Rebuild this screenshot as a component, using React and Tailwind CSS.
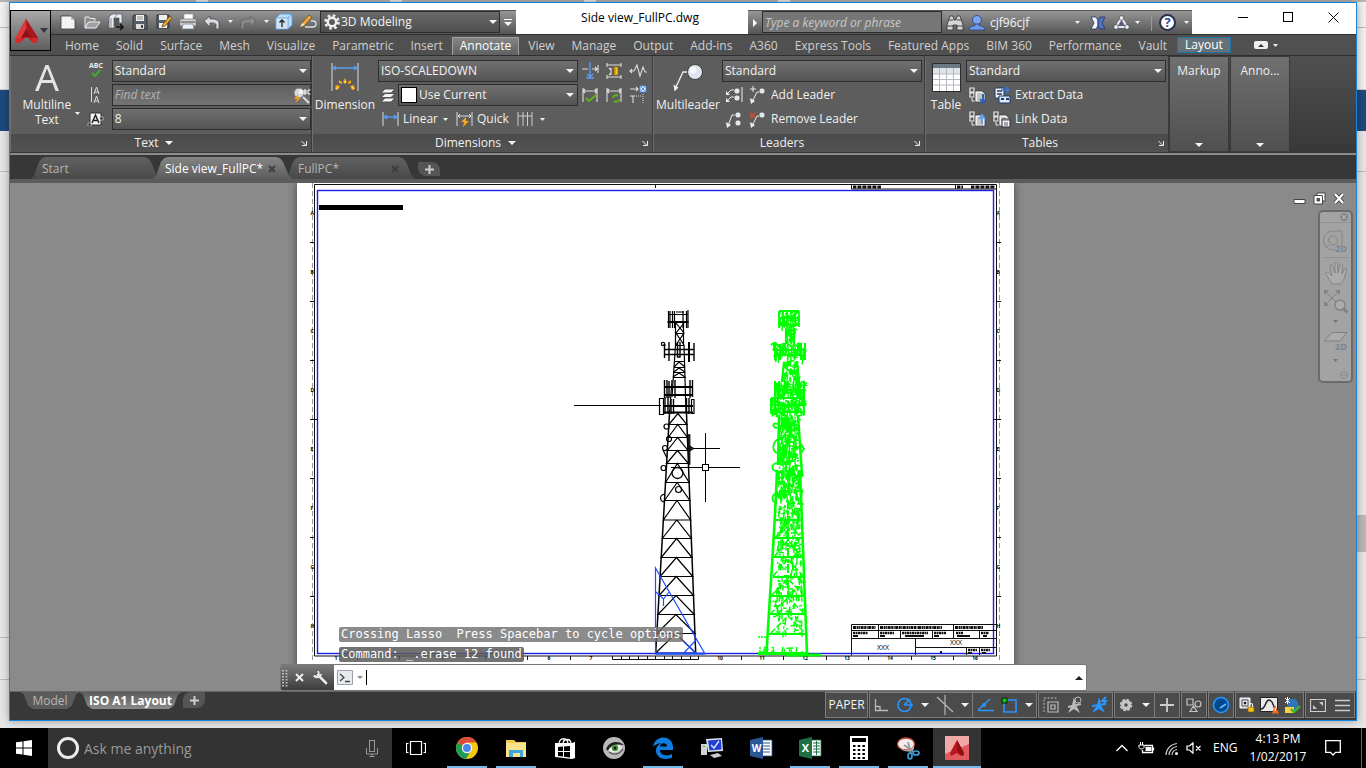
import { useState } from 'react';

const ribbonTabs = [
  'Home', 'Solid', 'Surface', 'Mesh', 'Visualize', 'Parametric', 'Insert', 'Annotate', 'View', 'Manage',
  'Output', 'Add-ins', 'A360', 'Express Tools', 'Featured Apps', 'BIM 360', 'Performance', 'Vault',
];

const Icon = ({ w = 20, h = 20, children }) => (
  <svg width={w} height={h} viewBox={`0 0 ${w} ${h}`} fill="none" aria-hidden="true" className="shrink-0">
    {children}
  </svg>
);

const Caret = ({ className = '' }) => (
  <svg width="8" height="4" viewBox="0 0 8 4" aria-hidden="true" className={`shrink-0 ${className}`}>
    <path d="M0 0h8L4 4z" fill="#f4f4f4" />
  </svg>
);

const SmallCaret = ({ className = '' }) => (
  <svg width="5" height="3" viewBox="0 0 5 3" aria-hidden="true" className={`shrink-0 ${className}`}>
    <path d="M0 0h5L2.500 3z" fill="#f0f0f0" />
  </svg>
);

const Combo = ({ label, value, className = '', pad = 'pl-[2px]' }) => (
  <div className={`relative flex h-[22px] ${className}`}>
    <select
      aria-label={label}
      className={`w-full appearance-none border border-[#2d2d2d] bg-linear-to-b from-[#717171] to-[#545454] ${pad} text-[12px] text-[#f2f2f2] outline-none`}
    >
      <option>{value}</option>
    </select>
    <Caret className="pointer-events-none absolute top-[9px] right-[4px]" />
  </div>
);

/* ---------- title bar ---------- */

const quickAccess = [
  {
    name: 'New',
    icon: (
      <Icon>
        <path d="M3 4h10l4 4v9H3z" fill="#f3f3f3" stroke="#3b3b3b" strokeWidth=".8" />
        <path d="M13 4v4h4z" fill="#bdbdbd" />
      </Icon>
    ),
  },
  {
    name: 'Open',
    icon: (
      <Icon>
        <path d="M3 16V5h4l1 1.500h5V9" fill="#8d8d8d" stroke="#eee" />
        <path d="M3 16l3.500-6H18l-4 6z" fill="#9aa0a6" stroke="#f2f2f2" />
      </Icon>
    ),
  },
  {
    name: 'Import',
    icon: (
      <Icon>
        <path d="M3 16V5l3-3h10v9h-3V6H8v10z" fill="#e8edf4" stroke="#59616c" strokeWidth=".8" />
        <path d="M8 6h5v8H8z" fill="#555" />
        <path d="M5 6v10M8 6l3-3" stroke="#8a929c" />
        <path d="M10 15h7M14 12l3 3-3 3" stroke="#111" strokeWidth="1.600" />
      </Icon>
    ),
  },
  {
    name: 'Save',
    icon: (
      <Icon>
        <path d="M4 3h12l1 1v13H3V4z" fill="#555d66" stroke="#2f343a" />
        <path d="M6 3h8v6H6z" fill="#f2f2f2" />
        <path d="M7 5h6M7 7h6" stroke="#8b8b8b" />
        <path d="M6 12h8v5H6z" fill="#ddd" />
        <path d="M11 13h2v3h-2z" fill="#444" />
      </Icon>
    ),
  },
  {
    name: 'Save As',
    icon: (
      <Icon>
        <path d="M3 3h12v13H3z" fill="#59616b" stroke="#2f343a" />
        <path d="M5 3h8v5H5zM5 11h8v5H5z" fill="#eee" />
        <path d="M9 12l7-8 2 2-7 8-3 1z" fill="#f0a830" stroke="#5b3b10" strokeWidth=".7" />
      </Icon>
    ),
  },
  {
    name: 'Plot',
    icon: (
      <Icon>
        <path d="M6 2h9v6H6z" fill="#fff" stroke="#999" strokeWidth=".6" />
        <path d="M2 7h16v7H2z" fill="#d4d4d4" stroke="#6e6e6e" strokeWidth=".7" />
        <path d="M3 10h14" stroke="#444" />
        <path d="M5 12h10l1 5H4z" fill="#eaf1fa" stroke="#777" strokeWidth=".7" />
      </Icon>
    ),
  },
  {
    name: 'Undo',
    icon: (
      <Icon>
        <path d="M2 9l6-5v3c6-.5 9 1.500 9 4v6h-3v-4c0-1.800-2-2.400-6-2v4z" fill="#d9dbe0" stroke="#444" strokeWidth=".7" />
      </Icon>
    ),
  },
  { name: 'Undo list', small: true },
  {
    name: 'Redo',
    icon: (
      <Icon>
        <path d="M18 9l-6-5v3c-6-.5-9 1.500-9 4v6h3v-4c0-1.800 2-2.400 6-2v4z" fill="#8c8c8c" stroke="#5a5a5a" strokeWidth=".7" />
      </Icon>
    ),
  },
  { name: 'Redo list', small: true },
  {
    name: 'Extrude',
    icon: (
      <Icon>
        <path d="M2 6l4-4h12v11l-4 4H2z" fill="#c3ddf4" stroke="#5aa0dc" />
        <path d="M2 6h12v11M14 6l4-4" stroke="#5aa0dc" />
        <path d="M2.500 6.500h11v10h-11z" fill="#cfe3f5" />
        <path d="M8 15V8M5.500 10.500L8 8l2.500 2.500" stroke="#222" strokeWidth="1.300" />
      </Icon>
    ),
  },
  {
    name: 'Sketch',
    icon: (
      <Icon>
        <path d="M7 15h8c4 0 4-6 0-6h-2" stroke="#ddd" strokeWidth="1.300" />
        <path d="M2 15l2-4 7-8 3 2-7 8z" fill="#f2a93b" stroke="#6b4310" strokeWidth=".7" />
        <path d="M2 15l2-4 3 2z" fill="#f7e3c0" />
      </Icon>
    ),
  },
];

const QuickAccess = () => (
  <div className="flex h-[24px] shrink-0 items-stretch self-end border-t border-[#555] bg-linear-to-b from-[#969696] to-[#555] pl-[5px]">
    {quickAccess.map((q) => (
      <button key={q.name} aria-label={q.name} className={`flex items-center justify-center pb-[2px] ${q.small ? 'w-[12px]' : 'w-[24px]'}`}>
        {q.small ? <SmallCaret /> : q.icon}
      </button>
    ))}
    <div className="relative mb-px flex w-[180px] border border-[#2d2d2d]">
      <select aria-label="Workspace" className="w-full appearance-none bg-linear-to-b from-[#6a6a6a] to-[#4e4e4e] pl-[20px] text-[12px] text-[#f2f2f2] outline-none">
        <option>3D Modeling</option>
      </select>
      <div className="pointer-events-none absolute top-[2px] left-[3px]">
        <Icon w={16} h={16}>
          <circle cx="8" cy="8" r="6.500" stroke="#eee" strokeWidth="2.600" strokeDasharray="2.600 2.500" />
          <circle cx="8" cy="8" r="4.200" stroke="#f2f2f2" strokeWidth="2.400" />
        </Icon>
      </div>
      <Caret className="pointer-events-none absolute top-[8px] right-[2px]" />
    </div>
    <button aria-label="Customize Quick Access Toolbar" className="flex w-[16px] flex-col items-center justify-center gap-[2px]">
      <span className="h-px w-[8px] bg-white" />
      <Caret />
    </button>
  </div>
);

const InfoCenter = () => (
  <div className="flex h-[24px] w-[444px] shrink-0 items-center self-end border-t border-[#555] bg-linear-to-b from-[#969696] to-[#555]">
    <button aria-label="Collapse search" className="flex w-[14px] justify-center">
      <svg width="4" height="8" viewBox="0 0 4 8"><path d="M0 0v8l4-4z" fill="#fff" /></svg>
    </button>
    <input
      aria-label="Search"
      placeholder="Type a keyword or phrase"
      className="mb-px h-[22px] w-[180px] border border-[#2d2d2d] bg-[#767676] px-[2px] text-[12px] italic outline-none placeholder:text-[#c8c8c8]"
    />
    <button aria-label="Find" className="flex w-[26px] justify-center">
      <Icon w={18} h={18}>
        <path d="M4 2h3l1 4h2l1-4h3l3 9v5h-6v-5H7v5H1v-5z" fill="#d6d6d6" stroke="#333" strokeWidth=".8" />
        <path d="M3 6h4M11 6h4M1 12h6M11 12h6" stroke="#444" />
      </Icon>
    </button>
    <button className="flex flex-1 items-center gap-[4px] text-[12px] text-[#f4f4f4]">
      <Icon w={17} h={17}>
        <circle cx="9" cy="6" r="4.500" fill="#7ba3ee" stroke="#28417a" strokeWidth=".8" />
        <path d="M1 16c0-3 3-4 6-4.500V10h4v1.500c3 .5 6 1.500 6 4.500z" fill="#6d98ea" stroke="#28417a" strokeWidth=".8" />
      </Icon>
      <span className="flex-1 pl-px text-left">cjf96cjf</span>
      <SmallCaret className="mr-[8px]" />
    </button>
    <button aria-label="Exchange Apps" className="flex w-[20px] justify-center">
      <Icon w={16} h={14}>
        <path d="M1 1h5l2 3.500v5L6 13H1l3-6z" fill="#f1f4fb" stroke="#22345e" strokeWidth=".8" />
        <path d="M15 1h-5L8 4.500v5l2 3.500h5l-3-6z" fill="#4f74c4" stroke="#22345e" strokeWidth=".8" />
      </Icon>
    </button>
    <button aria-label="Autodesk" className="flex w-[36px] items-center justify-center gap-[5px]">
      <Icon w={17} h={15}>
        <path d="M8.500 3L3 12h11z" stroke="#e9ebf2" strokeWidth="2" />
        <path d="M8.500 5.500L5.500 11h6z" fill="#56607c" />
        <g fill="#f4f4f4" stroke="#39425c" strokeWidth=".7">
          <circle cx="8.500" cy="3" r="2.300" /><circle cx="3" cy="12" r="2.300" /><circle cx="14" cy="12" r="2.300" />
        </g>
      </Icon>
      <SmallCaret />
    </button>
    <span className="mx-[7px] h-[16px] w-px bg-[#9a9a9a]" />
    <button aria-label="Help" className="mr-[3px] flex items-center gap-[8px]">
      <span className="flex size-[17px] items-center justify-center rounded-full border-2 border-[#28314c] bg-white text-[13px] leading-none font-bold text-[#2b4c9b]">?</span>
      <SmallCaret />
    </button>
  </div>
);

const WindowButtons = () => (
  <div className="flex h-[28px] w-[164px] shrink-0 justify-end">
    <button aria-label="Minimize" className="flex w-[45px] items-center justify-center">
      <span className="h-px w-[10px] bg-black" />
    </button>
    <button aria-label="Maximize" className="flex w-[46px] items-center justify-center">
      <span className="size-[10px] border border-black" />
    </button>
    <button aria-label="Close" className="flex w-[45px] items-center justify-center">
      <Icon w={11} h={11}><path d="M.5.5l10 10M10.500.5l-10 10" stroke="#000" /></Icon>
    </button>
  </div>
);

const Header = ({ active, onSelect }) => (
  <header className="flex bg-[#505050]">
    <div className="w-[41px] shrink-0 border-t-[7px] border-white">
      <button aria-label="Application menu" className="flex h-[41px] w-full items-center border border-black bg-linear-to-b from-[#a9a9a9] to-[#5f5f5f] pl-[3px]">
        <Icon w={25} h={28}>
          <path d="M12 2L1 22l1 4 5-1 4-4h3l5 5h4l1-5z" fill="#c92026" />
          <path d="M12 2L1 22l6-1 5-7z" fill="#e0383b" />
          <path d="M12 2l12 19-5 1-6-8z" fill="#a9171c" />
          <path d="M7 21l5-9 6 9-4-1h-3z" fill="#8c1216" />
          <path d="M1 22l1 4 5-1 1-4zM18 21l1 5h4l1-5z" fill="#d32b2e" />
        </Icon>
        <svg width="8" height="5" viewBox="0 0 8 5" className="ml-px shrink-0"><path d="M0 0h8L4 5z" fill="#33373d" /></svg>
      </button>
    </div>
    <div className="flex min-w-0 flex-1 flex-col">
      <div className="flex h-[31px] bg-white">
        <QuickAccess />
        <h1 className="min-w-0 flex-1 truncate pt-[6px] pl-[16px] text-center text-[12px] leading-[18px] text-black">Side view_FullPC.dwg</h1>
        <InfoCenter />
        <WindowButtons />
      </div>
      <nav className="flex h-[21px] items-end gap-px border-t border-[#2f2f2f] pl-[6px]">
        {ribbonTabs.map((t) => (
          <button
            key={t}
            onClick={() => onSelect(t)}
            className={`h-[18px] border border-b-0 px-[7px] pb-[2px] text-[12px] leading-[14px] whitespace-nowrap ${
              t === active ? 'border-[#a0a0a0] bg-linear-to-b from-[#858585] to-[#606060] text-white' : 'border-transparent text-[#cfcfcf]'
            }`}
          >
            {t}
          </button>
        ))}
        <button className="mb-[2px] ml-px h-[16px] border border-[#2272a5] bg-[#66727a] px-[7px] text-[12px] leading-[12px] text-white">Layout</button>
        <button aria-label="Minimize ribbon" className="mb-[6px] ml-[22px] flex items-center gap-[5px]">
          <span className="flex h-[8px] w-[14px] items-center justify-center rounded-[2px] bg-[#eee]">
            <svg width="6" height="3" viewBox="0 0 6 3"><path d="M0 3h6L3 0z" fill="#333" /></svg>
          </span>
          <SmallCaret />
        </button>
      </nav>
    </div>
  </header>
);

/* ---------- ribbon ---------- */

const Panel = ({ title, menu, className = '', children }) => (
  <section className={`flex shrink-0 flex-col border-r border-[#3a3a3a] bg-[#5d5d5d] ${className}`}>
    <div className="flex h-[78px] border-l border-[#6e6e6e] pt-[4px]">{children}</div>
    <div className="flex h-[18px] items-center border-l border-[#6e6e6e] bg-linear-to-b from-[#4b4b4b] to-[#525252] pr-[4px]">
      <button className="flex flex-1 items-center justify-center gap-[7px] pr-[4px] text-[12px] leading-[16px] text-[#f0f0f0]">
        {title}
        {menu && <Caret />}
      </button>
      <button aria-label={`${title} settings`}>
        <Icon w={6} h={6}><path d="M.5 1l4 4M5.500 1v4.500H1" stroke="#eee" /></Icon>
      </button>
    </div>
  </section>
);

const IconButton = ({ label, className = 'w-[24px]', children }) => (
  <button aria-label={label} className={`flex h-[22px] shrink-0 items-center justify-center ${className}`}>
    {children}
  </button>
);

const TextPanel = () => (
  <Panel title="Text" menu className="w-[302px]">
    <button className="flex w-[72px] flex-col items-center pt-[4px] text-[12px] leading-[15px] text-[#f0f0f0]">
      <Icon w={26} h={28}>
        <path d="M1 27L11.500 1h3L25 27h-3.500l-3-8h-11l-3 8zM8.500 16h9L13 4.500z" fill="#e4e4e4" />
      </Icon>
      <span className="mt-[5px]">Multiline<br />Text</span>
    </button>
    <SmallCaret className="mt-[52px] -ml-[8px]" />
    <div className="ml-[4px] flex w-[24px] flex-col gap-[2px]">
      <IconButton label="Check Spelling">
        <svg width="18" height="18" viewBox="0 0 18 18" aria-hidden="true">
          <text x="9" y="6" fontSize="7" fontWeight="bold" textAnchor="middle" fill="#eee">ABC</text>
          <path d="M5 11l3 3 5-6" stroke="#3fae2a" strokeWidth="2" fill="none" />
        </svg>
      </IconButton>
      <IconButton label="Text Style">
        <Icon w={12} h={18}>
          <path d="M1.500 1v15" stroke="#ddd" />
          <path d="M4 8l2.500-7L9 8M5 6h3M4 17l2.500-7L9 17M5 15h3" stroke="#ddd" />
        </Icon>
      </IconButton>
      <IconButton label="Justify">
        <Icon w={17} h={14}>
          <path d="M3 1h11v12H3z" fill="#f3f3f3" stroke="#333" />
          <path d="M5 11L8.500 3 12 11M6.500 8.500h4" stroke="#222" strokeWidth="1.500" />
          <path d="M1 11h3v3H1zM13 5h3v3h-3z" fill="#222" stroke="#eee" strokeWidth=".6" />
        </Icon>
      </IconButton>
    </div>
    <div className="ml-[4px] flex w-[200px] flex-col gap-[2px]">
      <Combo label="Text style" value="Standard" />
      <div className="relative flex h-[22px]">
        <input aria-label="Find text" placeholder="Find text" className="w-full border border-[#2d2d2d] bg-linear-to-b from-[#606060] to-[#747474] px-[2px] text-[12px] italic outline-none placeholder:text-[#b4b4b4]" />
        <div className="pointer-events-none absolute top-[2px] right-0">
          <Icon w={18} h={18}>
            <circle cx="6" cy="7" r="5" fill="#d9d9d9" stroke="#777" />
            <path d="M10 11l6 6" stroke="#ddd" strokeWidth="2" />
            <path d="M7 8V4h2v4M7 6h2M11 4h2v4h-2zM11 6h2M17.500 4H15v4h2.500" stroke="#fff" />
            <path d="M5 8l-4 5h3l-2 4 6-5H5z" fill="#f49b16" />
          </Icon>
        </div>
      </div>
      <Combo label="Text height" value="8" />
    </div>
  </Panel>
);

const dimTools = [
  { name: 'Adjust Space', d: 'M1 8h6M17 4v8M16 8h-5M14 6l2 2-2 2', blue: 'M9 1v15M6 13l3 3 3-3M5 17h8' },
  { name: 'Break', d: 'M2 2v4M16 2v4M2 4h14M2 14v4M16 14v4M2 16h14M4 7l2 2v3l-2 2M6 7v7', gold: true },
  { name: 'Jog', d: 'M1 10h4M3 8l-2 2 2 2M5 10l3-6 3 11 3-9 2 5h2' },
  { name: 'Update', d: 'M2 3v14M16 3v14M2 6h14M4 4L2 6l2 2M14 4l2 2-2 2', green: 'M5 13l3 3 7-6' },
  { name: 'Reassociate', d: 'M2 3v14M16 3v14M2 6h14M4 4L2 6l2 2M14 4l2 2-2 2', green: 'M8 13a3 3 0 0 1 5-2M14 14a3 3 0 0 1-5 2' },
  { name: 'Tolerance', d: 'M1 4h8M7 2l2 2-2 2M1 11h5M4 11v7', box: true },
];

const DimensionsPanel = () => (
  <Panel title="Dimensions" menu className="w-[341px]">
    <button className="flex w-[64px] flex-col items-center pt-[2px] text-[12px] leading-[15px] text-[#f0f0f0]">
      <Icon w={28} h={30}>
        <path d="M1 1v28M27 1v28" stroke="#ddd" />
        <path d="M2 6h24M5 4L2 6l3 2M23 4l3 2-3 2" stroke="#5b9bf0" strokeWidth="1.300" />
        <g fill="#f8a71b">
          <path d="M14 16l2 4-2 2-2-2zM8 18l3 2v2l-3-1zM20 18l-3 2v2l3-1zM5 23l4 1-2 4-3-1zM23 23l-4 1 2 4 3-1z" />
        </g>
        <path d="M14 19v2M7 25l-2 2M21 25l2 2" stroke="#fff0a0" />
      </Icon>
      <span className="mt-[5px]">Dimension</span>
    </button>
    <div className="ml-px flex w-[200px] flex-col gap-[2px]">
      <Combo label="Dimension style" value="ISO-SCALEDOWN" />
      <div className="flex">
        <IconButton label="Layer override" className="w-[20px]">
          <Icon w={16} h={16}>
            <path d="M5 11h10l-4 4H1zM5 6.500h10l-4 4H1zM5 2h10l-4 4H1z" fill="#f2f2f2" stroke="#4a4a4a" strokeWidth=".9" />
          </Icon>
        </IconButton>
        <div className="relative flex flex-1">
          <Combo label="Dimension layer" value="Use Current" className="flex-1" pad="pl-[20px]" />
          <span className="pointer-events-none absolute top-[3px] left-[3px] size-[16px] border border-black bg-white" />
        </div>
      </div>
      <div className="flex h-[22px] items-center text-[12px] text-[#f0f0f0]">
        <button className="flex w-[60px] items-center gap-[4px] pl-[4px]">
          <Icon w={17}>
            <path d="M1 3v14M16 3v14" stroke="#ddd" />
            <path d="M2 8h13M5 6L2 8l3 2M12 6l3 2-3 2" stroke="#5b9bf0" strokeWidth="1.300" />
          </Icon>
          Linear
        </button>
        <button aria-label="Linear list" className="flex w-[10px] justify-end"><SmallCaret /></button>
        <button className="ml-[8px] flex w-[60px] items-center gap-[4px]">
          <Icon w={17}>
            <path d="M1 3v14M16 3v14M2 7h13M4 5L2 7l2 2M13 5l2 2-2 2" stroke="#ddd" />
            <path d="M10 8l-5 5h3l-1 5 6-6h-3z" fill="#f8a71b" />
          </Icon>
          Quick
        </button>
        <button aria-label="Continue" className="ml-px flex items-center gap-[7px]">
          <Icon w={16}>
            <path d="M1 3v14M6 3v14M10.500 3v14M15 3v14M1 7h14" stroke="#ccc" />
          </Icon>
          <SmallCaret />
        </button>
      </div>
    </div>
    <div className="grid h-[46px] grid-cols-3 gap-y-[2px]">
      {dimTools.map((t) => (
        <IconButton key={t.name} label={t.name}>
          <Icon w={18}>
            <path d={t.d} stroke="#ddd" strokeWidth="1.100" />
            {t.blue && <path d={t.blue} stroke="#5b9bf0" strokeWidth="1.400" />}
            {t.green && <path d={t.green} stroke="#5fb41a" strokeWidth="2" />}
            {t.gold && <path d="M9 6h4v8H9zM9 8h2M9 10h2M9 12h2" fill="#f6c52c" stroke="#9a6a00" strokeWidth=".7" />}
            {t.box && (
              <>
                <path d="M7 11h6M14 9v9" stroke="#ddd" strokeDasharray="1 1" />
                <path d="M11 1h6v6h-6zM12 2l4 4M16 2l-4 4" fill="#e8f0fb" stroke="#4b8ae0" />
              </>
            )}
          </Icon>
        </IconButton>
      ))}
    </div>
  </Panel>
);

const Dot = ({ x, y, r = 3 }) => <circle cx={x} cy={y} r={r} fill="#e3e7ee" stroke="#444" strokeWidth=".6" />;

const LeadersPanel = () => (
  <Panel title="Leaders" className="w-[272px]">
    <button className="flex w-[68px] flex-col items-center pt-[3px] text-[12px] leading-[15px] text-[#f0f0f0]">
      <Icon w={32} h={29}>
        <path d="M3 26L11 9h7" stroke="#eee" strokeWidth="1.300" />
        <path d="M1.500 21.500l1 7 4-4z" fill="#eee" />
        <circle cx="23" cy="9" r="7.500" fill="#dfe5ee" stroke="#3f3f3f" />
        <circle cx="21" cy="7" r="3.500" fill="#f4f7fb" />
      </Icon>
      <span className="mt-[5px]">Multileader</span>
    </button>
    <div className="flex w-[200px] flex-col gap-[2px]">
      <Combo label="Multileader style" value="Standard" />
      <div className="flex text-[12px] text-[#f0f0f0]">
        <IconButton label="Align">
          <Icon w={18}>
            <path d="M2 9l4-4h4M2 16l4-4h4M17 2v15" stroke="#eee" />
            <path d="M1 6v4h4zM1 13v4h4z" fill="#eee" />
            <Dot x={12} y={6} /><Dot x={12} y={13} />
          </Icon>
        </IconButton>
        <button className="flex h-[22px] items-center gap-[4px] pl-[3px]">
          <Icon w={18}>
            <path d="M3 17L8 7h4M1 4h6M4 1v6" stroke="#eee" />
            <path d="M1 13l1 6 4-3z" fill="#eee" />
            <Dot x={13} y={6} />
          </Icon>
          Add Leader
        </button>
      </div>
      <div className="flex text-[12px] text-[#f0f0f0]">
        <IconButton label="Collect">
          <Icon w={18}>
            <path d="M3 17L7 6h4" stroke="#eee" />
            <path d="M1 13l1 6 4-3z" fill="#eee" />
            <Dot x={13} y={6} /><Dot x={13} y={14} />
          </Icon>
        </IconButton>
        <button className="flex h-[22px] items-center gap-[4px] pl-[3px]">
          <Icon w={18}>
            <path d="M3 17L8 7h4" stroke="#eee" />
            <path d="M1 13l1 6 4-3z" fill="#eee" />
            <path d="M1 4l5 5M6 4L1 9" stroke="#e0482a" strokeWidth="1.500" />
            <Dot x={13} y={6} />
          </Icon>
          Remove Leader
        </button>
      </div>
    </div>
  </Panel>
);

const SheetIcon = ({ children }) => (
  <Icon w={18} h={18}>
    <path d="M1 2h4v4H1zM1 7h4v4H1z" fill="#555" stroke="#eee" strokeWidth="1.200" />
    <path d="M3 12v3h3" stroke="#eee" />
    <path d="M6 5h7l3 3v8H6z" fill="#f0f0f0" stroke="#333" strokeWidth=".7" />
    <path d="M8 8h5M8 10h6M8 12h6M8 14h6" stroke="#999" />
    {children}
  </Icon>
);

const TablesPanel = () => (
  <Panel title="Tables" className="w-[244px]">
    <button className="flex w-[40px] flex-col items-center pt-[3px] text-[12px] leading-[15px] text-[#f0f0f0]">
      <Icon w={29} h={29}>
        <path d="M.5.5h28v28H.5z" fill="#fff" stroke="#2c2c2c" />
        <path d="M1 1h27v4H1z" fill="#6b7785" />
        <path d="M1 5h27v6H1z" fill="#dfe3ea" />
        <path d="M7.500 5v23M14.500 5v23M21.500 5v23M1 11h27M1 16.500h27M1 22h27" stroke="#b4b8bf" />
      </Icon>
      <span className="mt-[5px]">Table</span>
    </button>
    <div className="flex w-[200px] flex-col gap-[2px]">
      <Combo label="Table style" value="Standard" />
      <div className="flex text-[12px] text-[#f0f0f0]">
        <IconButton label="Download from Source">
          <SheetIcon><path d="M14 8v8M11 13l3 4 3-4" stroke="#2a62b8" strokeWidth="2" /></SheetIcon>
        </IconButton>
        <button className="flex h-[22px] items-center gap-[4px] pl-[3px]">
          <Icon w={18} h={18}>
            <path d="M2 2h9v10H2z" fill="#f0f0f0" stroke="#1c3a6e" />
            <path d="M4 5h5M4 8h5" stroke="#1c3a6e" strokeWidth="1.500" />
            <path d="M8 4h8M13 1l3 3-3 3" stroke="#3b78cf" strokeWidth="1.700" />
            <path d="M6 10h11v7H6z" fill="#dce8f8" stroke="#1c3a6e" />
            <path d="M8 13h3M13 13h3" stroke="#1c3a6e" strokeWidth="2" />
          </Icon>
          Extract Data
        </button>
      </div>
      <div className="flex text-[12px] text-[#f0f0f0]">
        <IconButton label="Upload to Source">
          <SheetIcon><path d="M13 14V6M10 9l3-4 3 4" stroke="#5aa2f2" strokeWidth="2" /></SheetIcon>
        </IconButton>
        <button className="flex h-[22px] items-center gap-[4px] pl-[3px]">
          <SheetIcon>
            <path d="M9 9h8v8H9z" fill="#f4f4f4" stroke="#334" />
            <path d="M9 10h8M11 13h4M11 15h4" stroke="#556" />
          </SheetIcon>
          Link Data
        </button>
      </div>
    </div>
  </Panel>
);

const CollapsedPanel = ({ title }) => (
  <button className="mr-px flex w-[60px] shrink-0 flex-col items-center justify-between border border-[#3a3a3a] bg-linear-to-b from-[#707070] to-[#505050] pt-[5px] pb-[4px] text-[12px] leading-[18px] text-[#f0f0f0]">
    {title}
    <Caret />
  </button>
);

/* ---------- document tabs ---------- */

const tabShape =
  '[clip-path:polygon(0_100%,4px_86%,9px_22%,12px_6%,16px_0,calc(100%-16px)_0,calc(100%-12px)_6%,calc(100%-9px)_22%,calc(100%-3px)_86%,100%_100%)]';
const layoutShape =
  '[clip-path:polygon(0_0,4px_14%,8px_80%,13px_100%,calc(100%-13px)_100%,calc(100%-8px)_80%,calc(100%-4px)_14%,100%_0)]';

const DocTab = ({ name, active, closable, className }) => (
  <div
    className={`flex h-[22px] items-center pt-[2px] text-[12px] ${tabShape} ${
      active ? 'z-10 bg-linear-to-b from-[#858585] to-[#5d5d5d] text-white' : 'bg-linear-to-b from-[#616161] to-[#494949] text-[#b5b5b5]'
    } ${className}`}
  >
    <button className="flex-1 text-left">{name}</button>
    {closable && (
      <button aria-label={`Close ${name}`} className="mr-[16px]">
        <Icon w={8} h={8}><path d="M1 1l6 6M7 1L1 7" stroke="#3f3f3f" strokeWidth="2" /></Icon>
      </button>
    )}
  </div>
);

const DocTabs = () => (
  <div className="flex h-[30px] shrink-0 items-end border-t-2 border-b-4 border-t-[#8c8c8c] border-b-[#5c5c5c] bg-[#373737] pl-[20px]">
    <DocTab name="Start" className="w-[130px] pl-[12px]" />
    <DocTab name="Side view_FullPC*" active closable className="-ml-[8px] w-[140px] pl-[13px]" />
    <DocTab name="FullPC*" closable className="-ml-[8px] w-[131px] pl-[14px]" />
    <button aria-label="New tab" className="mb-[3px] ml-[3px] flex h-[14px] w-[22px] items-center justify-center rounded-tr-[8px] rounded-bl-[8px] bg-[#555]">
      <Icon w={9} h={9}><path d="M4.500 0v9M0 4.500h9" stroke="#ccc" strokeWidth="2" /></Icon>
    </button>
  </div>
);

/* ---------- drawing ---------- */

const levels = [413.5, 424.5, 437.5, 450.5, 463.5, 482.5, 500.5, 520, 538.5, 557.5, 576.5, 595.5, 614.5, 633.5, 653];
const leftLeg = (y) => 669.5 - ((y - 413.5) * 13.8) / 239.5;
const rightLeg = (y) => 686.5 + ((y - 413.5) * 9.2) / 239.5;

const bracing = levels
  .slice(1)
  .map((y, i) => {
    const top = levels[i];
    const mid = (leftLeg(y) + rightLeg(y)) / 2;
    return `M${leftLeg(y)} ${y}L${mid} ${top}L${rightLeg(y)} ${y}Z`;
  })
  .join('');

// left, right, top, bottom and number of strokes for each part of the scanned tower
const scanZones = [
  [780, 799, 311, 325, 60],
  [786, 795, 326, 342, 45],
  [773, 804, 343, 358, 120],
  [784, 798, 361, 379, 60],
  [776, 804, 381, 395, 130],
  [771, 804, 398, 412, 150],
  [779, 797, 415, 468, 290],
  [777, 800, 470, 498, 190],
  [778, 800, 500, 558, 170],
  [776, 802, 560, 598, 80],
  [772, 803, 600, 632, 60],
  [760, 804, 646, 653, 18],
];

const makeScan = () => {
  let seed = 29;
  const rnd = () => {
    seed = (seed * 16807) % 2147483647;
    return seed / 2147483647;
  };
  let d = '';
  scanZones.forEach(([l, r, t, b, n]) => {
    for (let i = 0; i < n; i++) {
      const x = l + rnd() * (r - l);
      const y = t + rnd() * (b - t);
      const flat = rnd() < 0.3;
      const dx = flat ? 2 + rnd() * 3 : (rnd() - 0.5) * 2;
      const dy = flat ? (rnd() - 0.5) * 2 : 2 + rnd() * 5;
      d += `M${x.toFixed(1)} ${y.toFixed(1)}l${dx.toFixed(1)} ${dy.toFixed(1)}`;
    }
  });
  return d;
};
const scan = makeScan();

const rows = 'ABCDEFGH'.split('');
const bottomTicks = [357, 399, 442, 485, 527, 570, 741, 783, 826, 868, 911, 953];
const bottomLabels = [['1', 336], ['6', 549], ['7', 591], ['10', 720], ['11', 762], ['12', 805], ['13', 847], ['14', 890], ['15', 933], ['16', 975]];

const BlackTower = () => (
  <g stroke="#000" strokeWidth="1.200" fill="none">
    <path d="M574 405.500h87M690 448.500h30" strokeWidth="1.200" />
    <path d="M668.500 311v17M670 311v17M672.500 311v17M674.500 311v17M683 311v17M686.500 311v17M688 310v18M676 312h8M668 314.500h20" />
    <path d="M667.500 322h21" strokeWidth="2" />
    <path d="M675.500 322v23M683.500 322v23M676 333.500h8M676 345.500h8M676 323l8 10-8 12M684 323l-8 10 8 12" />
    <path d="M664 349.500h30M664 354.500h30M664.500 345v13M669 342v19M677.500 342v15h2.500v-15M694 343v18" strokeWidth="1.400" />
    <path d="M689 342v20M665 346l-1-2" strokeWidth="2" />
    <circle cx="663" cy="344" r="1.700" />
    <path d="M675.500 345L672 397M684 345l2 68M674.500 361.500h10M674 367.500h11M673.500 372.500h12M673 377.500h13" />
    <path d="M674 367l5-5 6 5M674 372l5-4 6 4M673 377l6-4 6 4" />
    <path d="M664 387h29M664 395h29" strokeWidth="2.200" />
    <path d="M664.500 380v18M667 380v18M669 381v17M675 380v18M690 380v18M692.500 380v17" strokeWidth="1.400" />
    <path d="M659.500 398.500h4v16h-4zM691.500 399.500h2.500v14h-2.500z" />
    <path d="M663 406h30M663 412.500h30" strokeWidth="2" />
    <path d="M665 397v17M668 397v17M671 399v15M673.500 399v15M686.500 398v16M689 398v16" strokeWidth="1.400" />
    <path d="M672 380L669.500 413.500" />
    <path d={bracing} />
    <path d={`M669.500 413.500L${leftLeg(654)} 654M686.500 413.500L${rightLeg(654)} 654`} strokeWidth="1.500" />
    <path d="M688.500 434.500h1.500v30h-1.500zM690 446v5l4-2.500z" fill="#333" strokeWidth=".8" />
    <circle cx="666.500" cy="426.500" r="2.500" />
    <circle cx="669" cy="439" r="2.500" />
    <circle cx="665" cy="448" r="2.500" />
    <path d="M663 450l4 8" />
    <circle cx="663.500" cy="468" r="2.500" />
    <circle cx="677.500" cy="473" r="5.500" strokeWidth="1.300" />
    <circle cx="678.500" cy="489.500" r="3" />
    <path d="M665 494.500c-6-1-6 8 0 7.500" />
  </g>
);

const GreenTower = () => (
  <g stroke="#00ff00" fill="none">
    <path d={scan} strokeWidth="1.400" />
    <path d="M779 311h20M779 311v17M783 310v17M787 310v18M795 311v16M799 311v16M779 318h20M780 325h18" strokeWidth="1.800" />
    <path d="M786 328v16M794 328v18M784 362l-2 19M797 361l2 20" strokeWidth="2.200" />
    <path d="M771 345c4-4 6-2 6 1M775 343v17M780 344v16M801 343v17M805 343v17M773 350h33M774 355h31" strokeWidth="2" />
    <path d="M775 381v16M779 381v16M799 381v17M804 381v34M771 398v16M775 398v17M771 398h34M771 412h34M775 390h30M772 405h32" strokeWidth="2" />
    <path d="M779 415l-1 50M798 415l4 60" strokeWidth="2.500" />
    <path d="M778 424c-6-2-6 3-1 4M778 439c-6 4-6 12-1 14M778 463c-8 0-7 9 0 8M777 494c-6-1-6 9 0 9M801 444l3 5-3 4" strokeWidth="1.800" />
    <path d="M777 470C775 530 770 590 766.500 654M800 470c2 60 4 120 7 184" strokeWidth="2.600" />
    <path d="M775 520h26M774 538h28M773 557h30M773 577h31M771 596h33M770 614h35M769 634h36" strokeWidth="1.800" />
    <path d="M775 538l13-16 13 16M774 557l14-17 14 17M773 576l15-17 15 17M772 595l16-16 16 16M770 614l18-16 17 16M771 633l17-17 17 17" strokeDasharray="6 2" strokeWidth="1.600" />
    <path d="M788 500v96" strokeDasharray="9 2 4 1" strokeWidth="2" />
    <path d="M758 653.500h48M786 655h35" strokeWidth="3" />
    <path d="M758 637h10M760 647v6" strokeWidth="1.500" strokeDasharray="2 1" />
  </g>
);

const Sheet = () => (
  <svg width="717" height="508" viewBox="297 183 717 508" className="shrink-0 bg-white shadow-[0_0_8px_rgba(0,0,0,0.5)]" role="img" aria-label="Tower side view">
    <path d="M312.500 183v480M999.500 183v480" stroke="#999" strokeDasharray="5 3" />
    <path d="M314.500 184.500h682v471.500h-682z" fill="none" stroke="#111" />
    <rect x="317.500" y="190.500" width="676" height="463" fill="none" stroke="#1c1cf0" strokeWidth="1.400" />
    <path d="M655.500 184v4M851.500 184v5h145M955.500 184v5" stroke="#111" fill="none" />
    <path d="M853 187h28M957 187h6M971 187h24" stroke="#111" strokeWidth="3" strokeDasharray="3 .6 1 .4" />
    <path d="M319 207.500h84" stroke="#000" strokeWidth="5" />
    {rows.map((r, i) => (
      <g key={r} fontSize="5" fontWeight="bold" fill="#000" stroke="none">
        <text x="310.500" y={215 + i * 59}>{r}</text>
        <text x="996.500" y={215 + i * 59}>{r}</text>
        {i < 7 && <path d={`M310 ${242.5 + i * 59}h4M997 ${242.5 + i * 59}h4`} stroke="#111" />}
      </g>
    ))}
    <path d="M312 419.500h6M993 419.500h6" stroke="#111" />
    {bottomTicks.map((x) => <path key={x} d={`M${x}.5 656v4`} stroke="#111" />)}
    {bottomLabels.map(([t, x]) => (
      <text key={t} x={x} y="660" fontSize="5" fontWeight="bold" textAnchor="middle">{t}</text>
    ))}
    <path d="M612.500 656v3.500h86V656M621.500 656v3M629.500 656v3M638.500 656v3M647.500 656v3M655.500 656v3M664.500 656v3M672.500 656v3M681.500 656v3M690.500 656v3" fill="none" stroke="#111" />

    <g stroke="#111" fill="none">
      <path d="M851.500 655.500v-31h145v31M851.500 630.500h145M851.500 638.500h145M915.500 647.500h81" />
      <path d="M878.500 624v14M953.500 624v14M900.500 630v8M932.500 630v8M979.500 630v8M915.500 638v17M966.500 647v8M979.500 647v8" />
      <path d="M853 627.500h23M880 627.500h62M955 627.500h28" strokeWidth="3" strokeDasharray="3 .6 2 .5 1 .5" />
      <path d="M853 633h15M880 633h14M902 633h26M934 633h12M956 633h7M981 633h8M968 650h9M981 650h9" strokeWidth="2.500" strokeDasharray="2 .5" />
      <path d="M853 636h5M880 636h5M905 636h19M934 636h5M957 636h13M983 636h4M968 653h4M982 653h4M940 652h2" strokeWidth="2" />
    </g>
    <text x="883" y="650" fontSize="7" textAnchor="middle">XXX</text>
    <text x="956" y="645" fontSize="7" textAnchor="middle">XXX</text>

    <BlackTower />
    <GreenTower />
    <path d="M655.500 568v86H705zM656 592l7.500 7v7M669 592l-5.500 7M683 641l13 12M696 640l-13 14" fill="none" stroke="#1f4fff" strokeWidth="1.200" />
    <path d="M656 653.500h48" stroke="#1f4fff" strokeWidth="2" />
    <path d="M671 467.500h31M709 467.500h31M705.500 433v31M705.500 471v31" stroke="#000" />
    <rect x="702.500" y="464.500" width="6" height="6" fill="#fff" stroke="#000" />
  </svg>
);

const NavBar = () => (
  <aside className="absolute top-[27px] right-[3px] flex h-[173px] w-[35px] flex-col items-center rounded-[5px] border-2 border-[#6b6b6b] bg-[#a3a3a3]">
    <button aria-label="Close navigation bar" className="flex h-[11px] w-full items-center justify-end border-b border-[#929292] pr-[3px]">
      <Icon w={8} h={8}><circle cx="4" cy="4" r="4" fill="#888" /><path d="M2 2l4 4M6 2L2 6" stroke="#bbb" /></Icon>
    </button>
    <button aria-label="Steering wheel" className="mt-[7px] flex h-[28px] w-[26px] items-start border-b border-[#929292]">
      <svg width="26" height="26" viewBox="0 0 26 26" aria-hidden="true">
        <path d="M19 1v15M19 1h-9a9.500 9.500 0 1 0 3 18.500" stroke="#858585" fill="none" />
        <circle cx="10" cy="10.500" r="4.500" stroke="#858585" fill="none" />
        <path d="M6 15l-3 3M14 15l3 2" stroke="#858585" />
        <text x="12" y="22" fontSize="9" fontWeight="bold" fill="#75869a">2D</text>
      </svg>
    </button>
    <button aria-label="Pan" className="mt-[3px]">
      <Icon w={24} h={25}>
        <path d="M8 23L2 13c-1-2 1-2.500 3-1l3 3L6 5c0-2 2-2 2.500 0L11 12V3c0-2 2.500-2 2.500 0l.5 9 2-8c.5-2 2.500-1.500 2.500.5L18 13l2.500-5c1-1.500 2.500-.5 2 1L20 18l-3 5z" stroke="#858585" fill="#acacac" />
      </Icon>
    </button>
    <button aria-label="Zoom extents" className="mt-[3px]">
      <Icon w={26} h={25}>
        <path d="M2 2l14 14M16 2L2 16" stroke="#808080" />
        <path d="M1 1h5L1 6zM17 1h-5l5 5zM1 17v-5l5 5z" fill="#808080" />
        <circle cx="17" cy="16" r="5" stroke="#808080" fill="#acacac" strokeWidth="1.300" />
        <path d="M20.500 19.500l4 4" stroke="#808080" strokeWidth="3" />
      </Icon>
    </button>
    <svg width="5" height="3" viewBox="0 0 5 3" className="mt-[6px] shrink-0"><path d="M0 0h5L2.500 3z" fill="#777" /></svg>
    <button aria-label="Orbit" className="mt-[8px]">
      <svg width="26" height="24" viewBox="0 0 26 24" aria-hidden="true">
        <path d="M1 10L9 1.500h15L17 10z" stroke="#808080" fill="#acacac" />
        <text x="12" y="19" fontSize="9" fontWeight="bold" fill="#75869a">2D</text>
      </svg>
    </button>
    <svg width="5" height="3" viewBox="0 0 5 3" className="mt-[4px] shrink-0"><path d="M0 0h5L2.500 3z" fill="#777" /></svg>
    <button aria-label="Navigation bar options" className="mt-auto mr-[3px] mb-[2px] self-end">
      <Icon w={8} h={8}><circle cx="4" cy="4" r="3.500" stroke="#888" /><path d="M2 4h4" stroke="#888" /></Icon>
    </button>
  </aside>
);

const Canvas = () => (
  <main className="relative flex min-h-0 flex-1 items-start overflow-hidden bg-[#8a8a8a] pl-[287px]">
    <Sheet />
    <div className="absolute top-[9px] right-[10px] flex gap-[7px]">
      <button aria-label="Minimize drawing"><Icon w={13} h={13}><path d="M1 7.500h11v4H1z" fill="#fff" stroke="#444" /></Icon></button>
      <button aria-label="Restore drawing">
        <Icon w={13} h={13}><path d="M4 1h8v8H4z" fill="#fff" stroke="#444" /><path d="M1 3.500h8.500V12H1z" fill="#fff" stroke="#444" /><path d="M4 6.500h2.500V9H4z" fill="#666" stroke="#444" /></Icon>
      </button>
      <button aria-label="Close drawing">
        <Icon w={13} h={13}><path d="M2 2l8 9M10 2l-8 9" stroke="#444" strokeWidth="4" /><path d="M2 2l8 9M10 2l-8 9" stroke="#fff" strokeWidth="2.200" /></Icon>
      </button>
    </div>
    <NavBar />

    <div className="absolute bottom-[29px] left-[329px] flex flex-col items-start gap-[5px] font-['DejaVu_Sans_Mono',monospace] text-[12px] leading-[15px] whitespace-pre text-white">
      <p className="rounded-[2px] bg-[#6e6e6e]/80 px-[2px]">Crossing Lasso  Press Spacebar to cycle options</p>
      <p className="rounded-[2px] bg-[#5a5a5a]/85 px-[2px]">Command: _.erase 12 found</p>
    </div>

    <div className="absolute bottom-0 left-[270px] flex h-[27px] w-[807px] items-stretch overflow-hidden rounded-[2px] border border-[#777] bg-white">
      <div className="flex w-[53px] items-center gap-[7px] bg-linear-to-b from-[#7a7a7a] to-[#3d3d3d] pl-px">
        <Icon w={6} h={18}><path d="M1 1v17M4.500 1v17" stroke="#bbb" strokeWidth="2" strokeDasharray="1.500 1.500" /></Icon>
        <button aria-label="Close command line"><Icon w={9} h={9}><path d="M1 1l7 7M8 1L1 8" stroke="#eee" strokeWidth="2" /></Icon></button>
        <button aria-label="Customize command line" className="ml-[2px]">
          <Icon w={15} h={15}>
            <path d="M5 5l8 8" stroke="#333" strokeWidth="4.500" strokeLinecap="round" />
            <path d="M5 5l8 8" stroke="#e4e8ee" strokeWidth="3" strokeLinecap="round" />
            <path d="M1 5.500A4 4 0 0 0 8 4M4 1.500" stroke="#e4e8ee" strokeWidth="2.500" />
            <path d="M5 1l1 3" stroke="#e4e8ee" strokeWidth="2" />
          </Icon>
        </button>
      </div>
      <button aria-label="Recent commands" className="ml-[3px] flex items-center gap-[4px]">
        <Icon w={16} h={15}>
          <path d="M.5.5h15v14H.5z" fill="#e6e9ee" stroke="#9aa3ae" />
          <path d="M3 4l4 3.500L3 11M8 11.500h5" stroke="#444" strokeWidth="1.300" />
        </Icon>
        <svg width="6" height="3" viewBox="0 0 6 3"><path d="M0 0h6L3 3z" fill="#8a8a8a" /></svg>
      </button>
      <div className="flex flex-1 items-center pl-[3px]">
        <span className="h-[15px] w-px bg-black" />
        <input aria-label="Command" className="w-full bg-transparent font-['DejaVu_Sans_Mono',monospace] text-[12px] outline-none" />
      </div>
      <button aria-label="Command history" className="px-[3px]">
        <svg width="8" height="4" viewBox="0 0 8 4"><path d="M0 4h8L4 0z" fill="#222" /></svg>
      </button>
    </div>
  </main>
);

/* ---------- status bar ---------- */

const Group = ({ className = '', children }) => (
  <div className={`flex h-[26px] items-center justify-around border border-[#7c7c7c] bg-[#4b4b4b] ${className}`}>{children}</div>
);

const Tool = ({ label, className = '', children }) => (
  <button aria-label={label} className={`flex h-full items-center justify-center ${className}`}>{children}</button>
);

const StatusBar = () => (
  <footer className="flex h-[29px] shrink-0 border-t border-[#666] bg-[#383838] pl-[10px] text-[12px]">
    <button className={`h-[17px] w-[60px] bg-[#5b5b5b] leading-[16px] text-[#b5b5b5] ${layoutShape}`}>Model</button>
    <button className={`-ml-px h-[17px] w-[103px] bg-linear-to-b from-[#5c5c5c] to-[#8a8a8a] leading-[16px] font-bold whitespace-nowrap text-white ${layoutShape}`}>ISO A1 Layout</button>
    <button aria-label="New layout" className="ml-px flex h-[16px] w-[22px] items-center justify-center rounded-tl-[8px] rounded-br-[8px] bg-[#555]">
      <Icon w={9} h={9}><path d="M4.500 0v9M0 4.500h9" stroke="#ccc" strokeWidth="2" /></Icon>
    </button>
    <div className="ml-auto flex gap-px pr-px">
      <Group className="w-[43px] text-[#f4f4f4]"><button className="text-[12px]">PAPER</button></Group>
      <div className="flex h-[26px] w-[168px] border border-[#7c7c7c] bg-[#4b4b4b]">
        <div className="flex w-[103px] items-center justify-around border-r border-[#7c7c7c]">
          <Tool label="Ortho"><Icon w={15} h={14}><path d="M1.500 1v11.500H14M2 8.500h4v4" stroke="#b8b8b8" strokeWidth="1.300" /></Icon></Tool>
          <Tool label="Polar tracking">
            <Icon w={18} h={18}><circle cx="8.500" cy="9" r="6.500" stroke="#2a95ff" strokeWidth="1.600" /><path d="M8 9h9M8 9l6-6" stroke="#2a95ff" strokeWidth="1.600" /></Icon>
          </Tool>
          <Caret />
          <Tool label="Isometric drafting"><Icon w={18} h={20}><path d="M1 2l16 15M9 0v20" stroke="#b8b8b8" strokeWidth="1.200" /></Icon></Tool>
          <Caret />
        </div>
        <div className="flex flex-1 items-center justify-around">
          <Tool label="Object snap tracking"><Icon w={17} h={14}><path d="M1 12.500h16M1 12L13 1" stroke="#2a95ff" strokeWidth="1.600" /><circle cx="7" cy="7" r="2" fill="#2a95ff" /></Icon></Tool>
          <Tool label="Object snap"><Icon w={17} h={17}><path d="M3 3h12v12H3z" stroke="#2a95ff" strokeWidth="1.600" /><path d="M1 1h5v5H1z" fill="#0c0" stroke="#111" /></Icon></Tool>
          <Caret />
        </div>
      </div>
      <Group className="w-[75px]">
        <Tool label="Selection cycling"><Icon w={16} h={16}><path d="M1 15V1h14" stroke="#bbb" strokeDasharray="2 1.500" /><path d="M5 5h10v10H5zM8 8h4v4H8z" stroke="#bbb" strokeWidth="1.200" /></Icon></Tool>
        <Tool label="Annotation visibility"><Icon w={18} h={18}><path d="M8 1l2 8 4 8-6-4-6 4 4-8z" fill="#bbb" /><circle cx="12" cy="4" r="3" stroke="#bbb" /><path d="M2 11l13-3" stroke="#bbb" strokeWidth="2" /></Icon></Tool>
        <Tool label="AutoScale"><Icon w={18} h={18}><path d="M8 1l2 8 4 8-6-4-7 4 5-8z" fill="#2a95ff" /><path d="M1 10l14-2M15 1l-4 4h4l-3 4" stroke="#2a95ff" strokeWidth="2" /></Icon></Tool>
      </Group>
      <div className="flex h-[26px] w-[66px] border border-[#7c7c7c] bg-[#4b4b4b]">
        <div className="flex w-[40px] items-center justify-around border-r border-[#7c7c7c]">
          <Tool label="Workspace switching"><Icon w={14} h={14}><circle cx="7" cy="7" r="3.500" stroke="#c4c4c4" strokeWidth="3.500" /><circle cx="7" cy="7" r="5.500" stroke="#c4c4c4" strokeWidth="1.600" strokeDasharray="2.600 1.700" /></Icon></Tool>
          <Caret />
        </div>
        <Tool label="Annotation monitor" className="flex-1"><Icon w={14} h={14}><path d="M7 0v14M0 7h14" stroke="#ccc" strokeWidth="1.800" /></Icon></Tool>
      </div>
      <Group className="w-[26px]">
        <Tool label="Isolate objects"><Icon w={16} h={15}><path d="M1 1h6v6H1zM7.500 8l3.500 5.500H4z" stroke="#c4c4c4" strokeWidth="1.200" /><circle cx="12" cy="6" r="3" stroke="#c4c4c4" strokeWidth="1.200" /></Icon></Tool>
      </Group>
      <Group className="w-[26px]">
        <Tool label="Hardware acceleration"><Icon w={18} h={18}><circle cx="9" cy="9" r="7.500" fill="#004a8f" stroke="#2a95ff" strokeWidth="1.600" /><path d="M8 12l6-4" stroke="#6cb8ff" strokeWidth="1.600" /></Icon></Tool>
      </Group>
      <Group className="w-[69px]">
        <Tool label="Lock UI">
          <Icon w={16} h={16}><path d="M1 1h10v10H1z" fill="#ddd" stroke="#f4f4f4" /><path d="M3 3h6v6H3z" fill="#fff" stroke="#445" /><circle cx="6" cy="6" r="1.500" fill="#223" /><path d="M9 10h6v5H9z" fill="#f8c21c" stroke="#7a5a00" strokeWidth=".7" /><path d="M10.500 10V8a1.500 1.500 0 0 1 3 0v2" stroke="#eee" strokeWidth="1.200" /></Icon>
        </Tool>
        <Tool label="Graphics performance">
          <Icon w={19} h={17}><path d="M.5.5h17v14H.5z" fill="#e9e9e9" stroke="#222" /><path d="M1 12c5 0 4-9 8-9s4 6 6 9" stroke="#222" strokeWidth="1.400" /><path d="M15 8l4 8.500h-7z" fill="#ef6a1f" /><path d="M15.300 11v3" stroke="#fff" /></Icon>
        </Tool>
        <Tool label="Associated standards">
          <Icon w={17} h={17}><path d="M3 2h8l3 3v8H3z" fill="#2e76b8" /><path d="M1 10h9v6H1z" fill="#f6d23c" /><path d="M1 1l5 5M6 1L1 6M3.500 0v7" stroke="#fff" /><path d="M7 12l3 3 6-6" stroke="#3cb52a" strokeWidth="2.400" /></Icon>
        </Tool>
      </Group>
      <Group className="w-[50px]">
        <Tool label="Clean screen"><Icon w={16} h={13}><path d="M.5.5h15v12H.5z" stroke="#ccc" strokeWidth="1.200" /><path d="M3 10V6l4 4zM13 3v4L9 3z" fill="#ccc" /></Icon></Tool>
        <Tool label="Customization"><Icon w={15} h={13}><path d="M0 1.500h15M0 6.500h15M0 11.500h15" stroke="#ccc" strokeWidth="1.500" /></Icon></Tool>
      </Group>
    </div>
  </footer>
);

/* ---------- desktop ---------- */

const apps = [
  {
    name: 'Chrome',
    bar: 'w-[40px]',
    icon: (
      <Icon w={24} h={24}>
        <circle cx="12" cy="12" r="11" fill="#f2c811" />
        <path d="M12 12L2.500 6.500A11 11 0 0 1 21.500 6.500H12z" fill="#dd4b3e" />
        <path d="M12 12L2.500 6.500A11 11 0 0 0 11 23l5-8.500z" fill="#1f9d55" />
        <circle cx="12" cy="12" r="5.200" fill="#fff" /><circle cx="12" cy="12" r="4" fill="#4a87ee" />
      </Icon>
    ),
  },
  {
    name: 'File Explorer',
    bar: 'w-[40px]',
    icon: (
      <Icon w={22} h={20}>
        <path d="M1 2h8l2 2h10v15H1z" fill="#f5c84b" /><path d="M1 5h20v14H1z" fill="#fde28c" />
        <path d="M4 19v-7h14v7h-3v-4H8v4z" fill="#3ba7e0" />
      </Icon>
    ),
  },
  {
    name: 'Store',
    icon: (
      <Icon w={22} h={24}>
        <path d="M1 7h17l3-1v16l-3 1-17-2z" fill="#fff" /><path d="M5 8c0-7 9-7 9 0M9 8c0-6 8-6 8 0" stroke="#fff" strokeWidth="1.300" />
        <path d="M4 11l5-.5v4.500H4zM10 10.500l6-.5v5h-6zM4 16h5v4.500L4 20zM10 16h6v5.500l-6-.8z" fill="#000" />
      </Icon>
    ),
  },
  {
    name: 'Viewer',
    icon: (
      <Icon w={24} h={24}>
        <circle cx="12" cy="12" r="11" fill="#b9b9b9" /><path d="M6 14C8 8 15 7 20 11c-3 6-10 7-14 3z" fill="#f2f2f2" />
        <path d="M4 13C7 5 16 4 22 9c-6-1-13-1-16 6z" fill="#222" /><circle cx="13" cy="12" r="3.300" fill="#4d9a3c" /><circle cx="13" cy="12" r="1.500" fill="#111" />
        <path d="M7 16c5 4 11 2 14-3" stroke="#555" strokeWidth="1.200" />
      </Icon>
    ),
  },
  {
    name: 'Edge',
    bar: 'w-[40px]',
    icon: (
      <Icon w={22} h={22}>
        <path d="M1 10C2 3 7 .5 11.500.5 17.500.5 21 5 21 10v3H8c0 6 8 6.500 12 4v3.500c-6 3-15 1.500-16-6-.5-4 2-7 5.500-8.500C5.500 6.500 2.500 8 1 10zm7-.5h7c0-4.500-6.500-4.500-7 0z" fill="#0d7ee0" />
      </Icon>
    ),
  },
  {
    name: 'Remote Desktop',
    icon: (
      <Icon w={24} h={22}>
        <path d="M1 7h6v11H1z" fill="#cfd3d8" /><path d="M6 2l16-1 1 13-15 1z" fill="#dfe4ea" /><path d="M8 3.500l13-1 .5 10-12 1z" fill="#1f3fd0" />
        <path d="M11 8l3 3 5-7" stroke="#cfe0ff" strokeWidth="1.500" /><path d="M10 18l8-2 4 3-8 2z" fill="#c9ced6" /><path d="M4 9v1" stroke="#2c2" strokeWidth="2" />
      </Icon>
    ),
  },
  {
    name: 'Word',
    icon: (
      <svg width="24" height="22" viewBox="0 0 24 22" aria-hidden="true">
        <path d="M12 3h11v16H12z" fill="#fff" stroke="#2b5797" strokeWidth=".8" /><path d="M14 6h7M14 9h7M14 12h7M14 15h7" stroke="#2b5797" /><path d="M1 3l13-3v22L1 19z" fill="#2b5797" />
        <text x="7.500" y="15" fontSize="10" fontWeight="bold" textAnchor="middle" fill="#fff">W</text>
      </svg>
    ),
  },
  {
    name: 'Excel',
    bar: 'w-[40px]',
    icon: (
      <svg width="24" height="22" viewBox="0 0 24 22" aria-hidden="true">
        <path d="M12 3h11v16H12z" fill="#fff" stroke="#1e7145" strokeWidth=".8" /><path d="M15 6h7M15 9h7M15 12h7M15 15h7M18.500 4v14" stroke="#1e7145" /><path d="M1 3l13-3v22L1 19z" fill="#1e7145" />
        <text x="7.500" y="15" fontSize="11" fontWeight="bold" textAnchor="middle" fill="#fff">X</text>
      </svg>
    ),
  },
  {
    name: 'Calculator',
    bar: 'w-[40px]',
    icon: (
      <Icon w={18} h={24}>
        <path d="M0 0h18v24H0z" fill="#fff" /><path d="M2 2h14v4H2z" fill="#000" />
        <path d="M3 10h12M3 14h12M3 18h12M3 22h12" stroke="#000" strokeWidth="2" strokeDasharray="2.500 2.200" />
      </Icon>
    ),
  },
  {
    name: 'Snipping Tool',
    bar: 'w-[40px]',
    icon: (
      <Icon w={24} h={24}>
        <ellipse cx="10" cy="8" rx="8.500" ry="6" fill="#f0eeee" stroke="#c9453a" strokeWidth="1.300" />
        <path d="M2 10c2 5 12 6 16 0v3c-4 4-13 3-16-3z" fill="#bdbdbd" />
        <path d="M8 9l10 7M12 6l3 12" stroke="#999" strokeWidth="1.800" />
        <ellipse cx="14" cy="20" rx="2" ry="3" stroke="#3ba0e0" strokeWidth="1.700" /><ellipse cx="20" cy="17" rx="3" ry="2" stroke="#3ba0e0" strokeWidth="1.700" />
      </Icon>
    ),
  },
  {
    name: 'AutoCAD',
    bar: 'w-full',
    current: true,
    icon: (
      <Icon w={24} h={24}>
        <path d="M0 0h24v24H0z" fill="#e25a5d" /><path d="M0 0h24v8L0 18z" fill="#f0a8a8" />
        <path d="M12 4L5 17l1 3 4-2 2-1 3 2 3 1 1-3z" fill="#b7171d" /><path d="M12 4l7 13-1 3-3-1-3-6z" fill="#8c0f14" />
      </Icon>
    ),
  },
];

const Taskbar = () => (
  <div className="flex h-[40px] shrink-0 bg-black text-white">
    <button aria-label="Start" className="flex w-[48px] items-center justify-center">
      <Icon w={16} h={16}><path d="M0 2.300L6.500 1.400V7.500H0zM7.500 1.200L16 0v7.500H7.500zM0 8.500h6.500v6.100L0 13.700zM7.500 8.500H16V16l-8.500-1.200z" fill="#fff" /></Icon>
    </button>
    <div className="flex w-[344px] shrink-0 items-center bg-[#333] pr-[14px] pl-[9px]">
      <span className="size-[22px] shrink-0 rounded-full border-[3px] border-[#eee]" />
      <input aria-label="Search Windows" placeholder="Ask me anything" className="min-w-0 flex-1 bg-transparent pl-[5px] text-[14px] outline-none placeholder:text-[#9a9a9a]" />
      <button aria-label="Speak">
        <Icon w={12} h={17}><rect x="3.500" y=".5" width="5" height="11" stroke="#999" /><path d="M.5 8v6h11V8M6 14v2.500M3.500 16.500h5" stroke="#999" /></Icon>
      </button>
    </div>
    <button aria-label="Task View" className="flex w-[48px] items-center justify-center">
      <Icon w={20} h={14}><path d="M4.500.5h11v13h-11zM2.500 2.500h-2v9h2M17.500 2.500h2v9h-2" stroke="#fff" strokeWidth="1.200" /></Icon>
    </button>
    <div className="ml-[3px] flex gap-px">
      {apps.map((a) => (
        <button key={a.name} aria-label={a.name} className={`flex w-[48px] flex-col items-center ${a.current ? 'bg-[#343434]' : ''}`}>
          <span className="flex flex-1 items-center pt-[2px]">{a.icon}</span>
          <span className={`h-[2px] ${a.bar ? `${a.bar} bg-[#76b9ed]` : ''}`} />
        </button>
      ))}
    </div>
    <div className="ml-auto flex items-center text-[12px]">
      <button aria-label="Show hidden icons" className="mr-[10px]"><Icon w={12} h={8}><path d="M.5 7L6 1.500 11.500 7" stroke="#fff" strokeWidth="1.300" /></Icon></button>
      <button aria-label="Battery" className="mr-[10px]">
        <Icon w={17} h={12}><path d="M6.500 3.500h8v7H4.500V8M15.500 5.500v3" stroke="#fff" strokeWidth="1.300" /><path d="M7.500 5h6v4h-6z" fill="#fff" /><path d="M1 3h5v2.500L4.500 7h-2L1 5.500zM2.500 0v3M4.500 0v3" stroke="#fff" fill="#000" /></Icon>
      </button>
      <button aria-label="Network" className="mr-[8px]">
        <Icon w={13} h={13}><circle cx="11.500" cy="11.500" r="1.500" fill="#fff" /><path d="M7 13a6 6 0 0 1 5-5.500M4 13a9 9 0 0 1 8-8.500M1 13A12 12 0 0 1 12 1.500" stroke="#ccc" strokeWidth="1.200" /></Icon>
      </button>
      <button aria-label="Volume muted" className="mr-[11px]">
        <Icon w={16} h={12}><path d="M1 4h2.500L7 .8v10.400L3.500 8H1zM10 4l4.500 4.500M14.500 4L10 8.500" stroke="#fff" strokeWidth="1.200" /></Icon>
      </button>
      <button className="w-[24px]">ENG</button>
      <button className="ml-[8px] w-[66px] text-center leading-[18px]">4:13 PM<br />1/02/2017</button>
      <button aria-label="Notifications" className="ml-[14px]">
        <Icon w={16} h={16}><path d="M.7.7h14.600v11.600H10.500L8 15l-2.500-2.700H.7z" stroke="#fff" strokeWidth="1.300" /></Icon>
      </button>
      <button aria-label="Show desktop" className="ml-[20px] h-[40px] w-[5px] border-l border-[#666]" />
    </div>
  </div>
);

const Backdrop = () => (
  <div className="absolute inset-0 flex flex-col bg-[#e6e6e6]">
    <div className="flex h-[2px] gap-[12px] bg-[#e8e8e8]">
      <span className="w-[196px] bg-[#b5b5b5]" />
      <span className="w-[182px] bg-[#b5b5b5]" />
      <span className="w-[182px] bg-[#b5b5b5]" />
      <span className="w-[182px] bg-[#b5b5b5]" />
      <span className="flex-1 bg-[#b5b5b5]" />
    </div>
    <div className="h-[26px] border-b border-[#b9b9b9] bg-[#f0f0f0]" />
    <div className="h-[62px] border-b border-[#ccc] bg-[#f0f0f0]" />
    <div className="h-[41px] bg-[#1d4a7c]" />
    <div className="h-[41px] border-b border-[#bbb]" />
    <div className="flex h-[466px] items-end justify-end border-b border-[#bbb] pb-[85px]">
      <span className="h-[37px] w-[9px] bg-[#b8b8b8]" />
    </div>
    <div className="h-[42px] border-b border-[#bbb]" />
  </div>
);

export default function App() {
  const [tab, setTab] = useState('Annotate');

  return (
    <div className="flex h-screen flex-col overflow-hidden font-['Open_Sans',sans-serif]">
      <div className="relative flex min-h-0 flex-1 flex-col">
        <Backdrop />
        <div className="relative mx-[9px] mt-[2px] mb-[7px] flex min-h-0 flex-1 flex-col border border-[#1883d7] shadow-[0_0_8px_rgba(0,0,0,0.35)]">
          <Header active={tab} onSelect={setTab} />
          <div className="flex h-[98px] shrink-0 border-t border-[#2f2f2f] bg-linear-to-b from-[#505050] to-[#383838] pb-px">
            <TextPanel />
            <DimensionsPanel />
            <LeadersPanel />
            <TablesPanel />
            <CollapsedPanel title="Markup" />
            <CollapsedPanel title="Anno..." />
          </div>
          <DocTabs />
          <Canvas />
          <StatusBar />
        </div>
      </div>
      <Taskbar />
    </div>
  );
}
